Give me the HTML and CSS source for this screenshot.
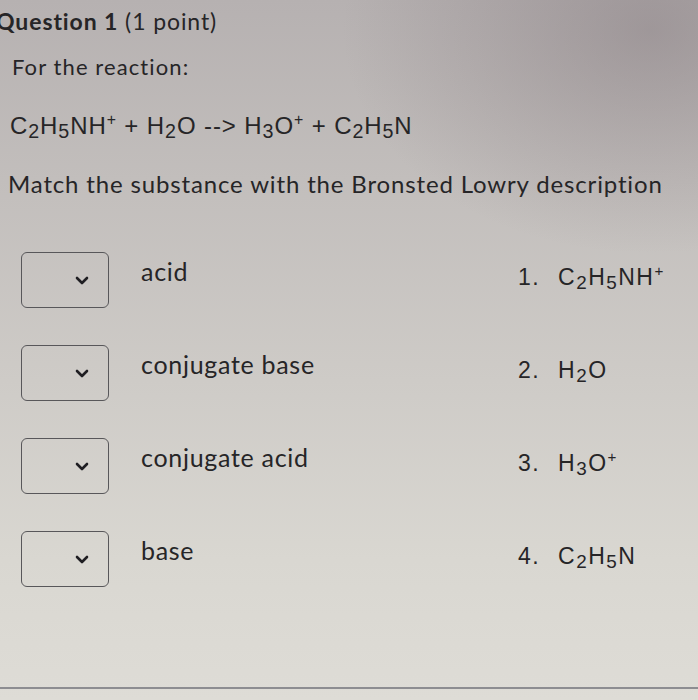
FILE: index.html
```html
<!DOCTYPE html>
<html lang="en">
<head>
<meta charset="utf-8">
<title>Question 1</title>
<link rel="stylesheet" href="styles.css">
</head>
<body>
<main class="page">
  <h1 class="title"><span class="title-num">Question 1</span> (1 point)</h1>
  <p class="lead">For the reaction:</p>
  <p class="equation">C<sub>2</sub>H<sub>5</sub>NH<sup>+</sup> + H<sub>2</sub>O --&gt; H<sub>3</sub>O<sup>+</sup> + C<sub>2</sub>H<sub>5</sub>N</p>
  <p class="prompt">Match the substance with the Bronsted Lowry description</p>

  <div class="match">
    <div class="row">
      <div class="select"><svg class="chev" viewBox="0 0 14 9"><path d="M2 2 L7 7 L12 2"/></svg></div>
      <span class="term">acid</span>
      <span class="choice"><span class="num">1.</span>C<sub>2</sub>H<sub>5</sub>NH<sup>+</sup></span>
    </div>
    <div class="row">
      <div class="select"><svg class="chev" viewBox="0 0 14 9"><path d="M2 2 L7 7 L12 2"/></svg></div>
      <span class="term">conjugate base</span>
      <span class="choice"><span class="num">2.</span>H<sub>2</sub>O</span>
    </div>
    <div class="row">
      <div class="select"><svg class="chev" viewBox="0 0 14 9"><path d="M2 2 L7 7 L12 2"/></svg></div>
      <span class="term">conjugate acid</span>
      <span class="choice"><span class="num">3.</span>H<sub>3</sub>O<sup>+</sup></span>
    </div>
    <div class="row">
      <div class="select"><svg class="chev" viewBox="0 0 14 9"><path d="M2 2 L7 7 L12 2"/></svg></div>
      <span class="term">base</span>
      <span class="choice"><span class="num">4.</span>C<sub>2</sub>H<sub>5</sub>N</span>
    </div>
  </div>

  <div class="rule"></div>
</main>
</body>
</html>
```

FILE: styles.css
```css
html, body {
  margin: 0;
  height: 700px;
  overflow: hidden;
}

body {
  color: #262527;
  font-family: Lato, "Open Sans", sans-serif;
  background:
    radial-gradient(ellipse 440px 320px at 650px 30px, rgba(118, 106, 112, 0.38), rgba(118, 106, 112, 0) 70%),
    linear-gradient(180deg, #b6b1b1 0px, #c2bebc 180px, #cecbc7 380px, #d9d7d1 560px, #dedcd6 700px);
}

.page {
  display: flex;
  flex-direction: column;
}

.title {
  margin: 6px 0 0 -4px;
  font-size: 23px;
  line-height: 30px;
  letter-spacing: 0.9px;
  font-weight: 400;
}

.title-num {
  font-weight: 700;
}

.lead {
  margin: 17px 0 0 12px;
  font-size: 22px;
  line-height: 28px;
  letter-spacing: 1.1px;
}

.equation {
  margin: 30px 0 0 10px;
  font-family: "Liberation Sans", Arial, sans-serif;
  font-size: 24px;
  line-height: 30px;
  letter-spacing: 0.9px;
}

.prompt {
  margin: 28px 0 0 8px;
  font-size: 24px;
  line-height: 30px;
  letter-spacing: 0.85px;
}

sub, sup {
  line-height: 0;
}

sub {
  font-size: 0.82em;
  vertical-align: -0.22em;
}

sup {
  font-size: 0.66em;
  vertical-align: 0.6em;
}

.match {
  display: flex;
  flex-direction: column;
  gap: 37px;
  margin-top: 53px;
}

.row {
  display: grid;
  grid-template-columns: 21px 88px 32px 1fr 180px;
  height: 56px;
  align-items: start;
}

.select {
  grid-column: 2;
  height: 54px;
  border: 1.5px solid #58575a;
  border-radius: 6px;
  display: flex;
  align-items: center;
  justify-content: flex-end;
  padding-right: 19px;
}

.chev {
  width: 14px;
  height: 9px;
  fill: none;
  stroke: #1f1e22;
  stroke-width: 2.6;
  stroke-linecap: round;
  stroke-linejoin: round;
}

.term {
  grid-column: 4;
  font-size: 25px;
  line-height: 30px;
  letter-spacing: 0.7px;
  margin-top: 4px;
}

.choice {
  grid-column: 5;
  font-family: "Liberation Sans", Arial, sans-serif;
  font-size: 23px;
  line-height: 28px;
  letter-spacing: 1.5px;
  margin-top: 11px;
  white-space: nowrap;
}

.num {
  display: inline-block;
  width: 40px;
}

.rule {
  margin-top: 100px;
  height: 2px;
  background: #8d8d91;
}
```
